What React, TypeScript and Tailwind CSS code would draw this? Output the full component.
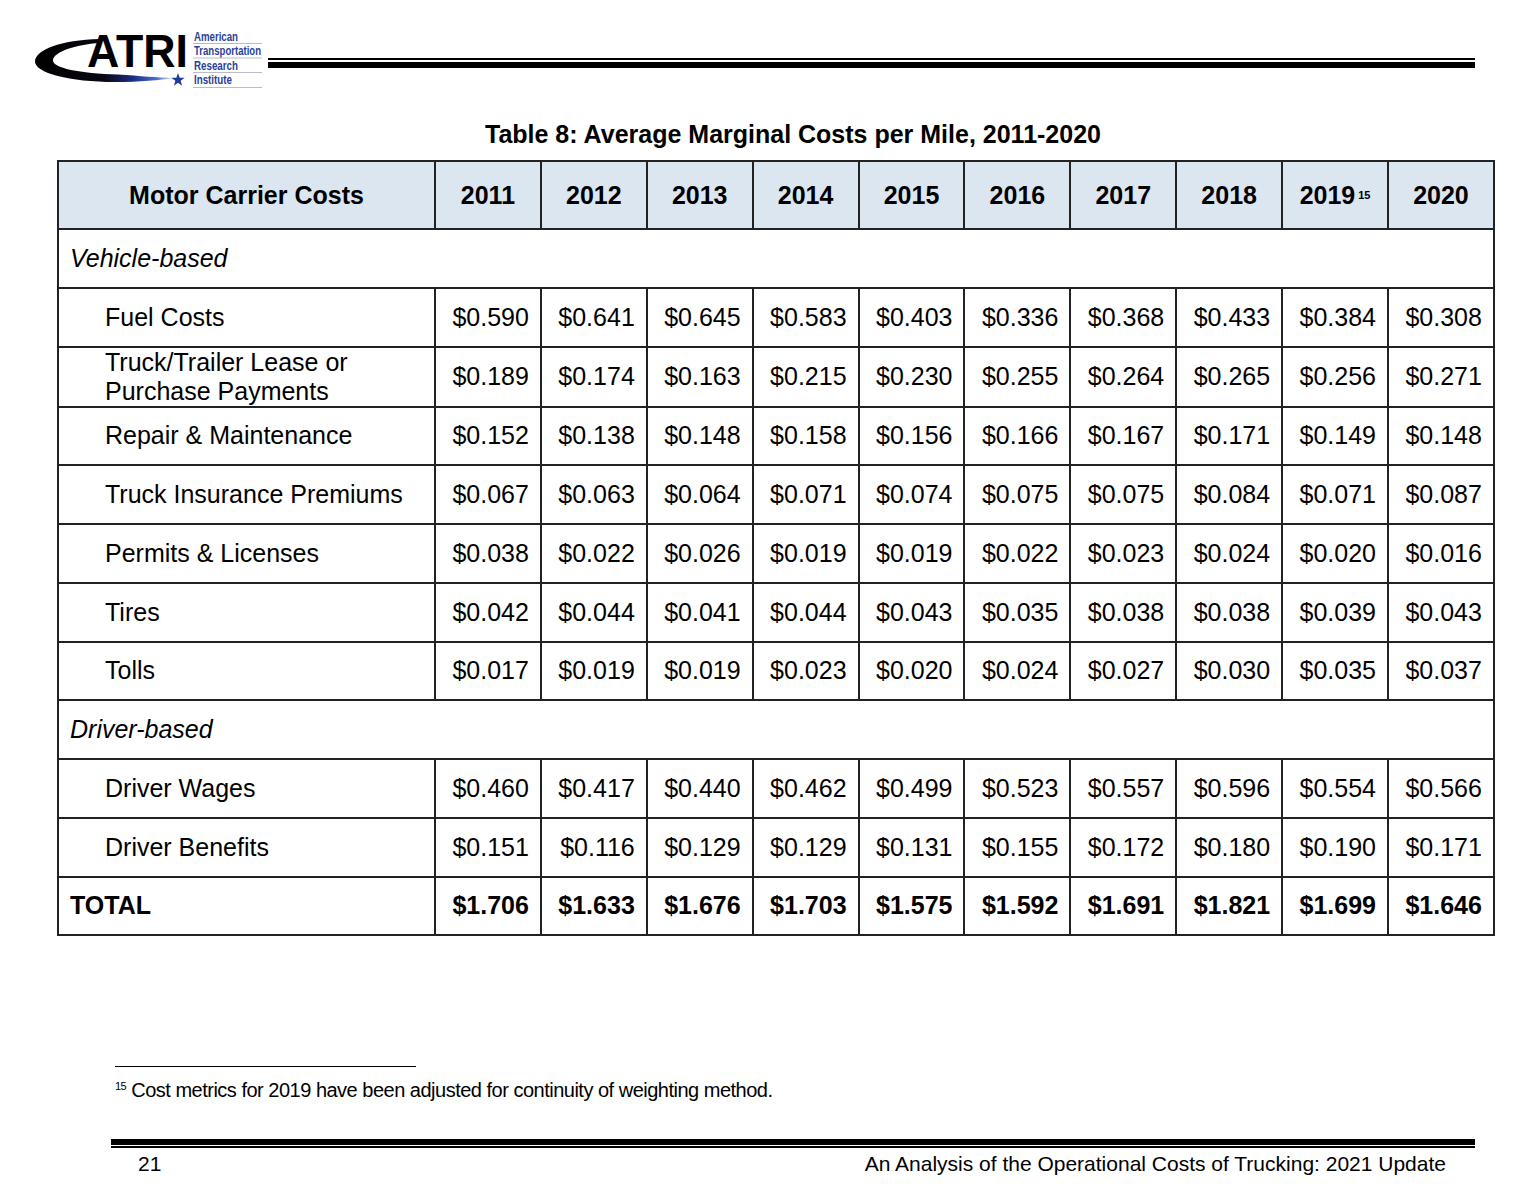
import React from "react";

const years = ["2011", "2012", "2013", "2014", "2015", "2016", "2017", "2018", "2019", "2020"];

type Row =
  | { kind: "section"; label: string }
  | { kind: "item"; label: React.ReactNode; values: string[] }
  | { kind: "total"; label: string; values: string[] };

const rows: Row[] = [
  { kind: "section", label: "Vehicle-based" },
  { kind: "item", label: "Fuel Costs", values: ["0.590", "0.641", "0.645", "0.583", "0.403", "0.336", "0.368", "0.433", "0.384", "0.308"] },
  {
    kind: "item",
    label: (
      <>
        Truck/Trailer Lease or
        <br />
        Purchase Payments
      </>
    ),
    values: ["0.189", "0.174", "0.163", "0.215", "0.230", "0.255", "0.264", "0.265", "0.256", "0.271"],
  },
  { kind: "item", label: "Repair & Maintenance", values: ["0.152", "0.138", "0.148", "0.158", "0.156", "0.166", "0.167", "0.171", "0.149", "0.148"] },
  { kind: "item", label: "Truck Insurance Premiums", values: ["0.067", "0.063", "0.064", "0.071", "0.074", "0.075", "0.075", "0.084", "0.071", "0.087"] },
  { kind: "item", label: "Permits & Licenses", values: ["0.038", "0.022", "0.026", "0.019", "0.019", "0.022", "0.023", "0.024", "0.020", "0.016"] },
  { kind: "item", label: "Tires", values: ["0.042", "0.044", "0.041", "0.044", "0.043", "0.035", "0.038", "0.038", "0.039", "0.043"] },
  { kind: "item", label: "Tolls", values: ["0.017", "0.019", "0.019", "0.023", "0.020", "0.024", "0.027", "0.030", "0.035", "0.037"] },
  { kind: "section", label: "Driver-based" },
  { kind: "item", label: "Driver Wages", values: ["0.460", "0.417", "0.440", "0.462", "0.499", "0.523", "0.557", "0.596", "0.554", "0.566"] },
  { kind: "item", label: "Driver Benefits", values: ["0.151", "0.116", "0.129", "0.129", "0.131", "0.155", "0.172", "0.180", "0.190", "0.171"] },
  { kind: "total", label: "TOTAL", values: ["1.706", "1.633", "1.676", "1.703", "1.575", "1.592", "1.691", "1.821", "1.699", "1.646"] },
];

function AtriLogo() {
  return (
    <svg width="230" height="64" viewBox="33 28 230 64" className="block">
      <defs>
        <linearGradient id="swoosh" gradientUnits="userSpaceOnUse" x1="35" y1="0" x2="174" y2="0">
          <stop offset="0" stopColor="#000000" />
          <stop offset="0.5" stopColor="#080814" />
          <stop offset="0.7" stopColor="#1b2c80" />
          <stop offset="0.87" stopColor="#4a6bd0" />
          <stop offset="1" stopColor="#d4def5" />
        </linearGradient>
      </defs>
      <path
        d="M100 39 C60 40 36 50 35 61 C34 73 70 82 115 82 C140 82 160 80 174 78 C158 77.5 140 76 118 74.5 C80 73.5 52 68 53 60 C54 52 75 44.5 100 43 Z"
        fill="url(#swoosh)"
      />
      <polygon
        points="178,73 179.65,77.73 184.66,77.84 180.66,80.87 182.11,85.66 178,82.8 173.89,85.66 175.34,80.87 171.34,77.84 176.35,77.73"
        fill="#1f3a9a"
      />
      <text
        x="87"
        y="67"
        fontFamily="'Liberation Sans', Arial, sans-serif"
        fontWeight="700"
        fontSize="47"
        textLength="101"
        lengthAdjust="spacingAndGlyphs"
        fill="#000"
      >
        ATRI
      </text>
      <g fontFamily="'Liberation Sans', Arial, sans-serif" fontWeight="700" fontSize="12" fill="#2a3f9b">
        <text x="194" y="40.5" textLength="44" lengthAdjust="spacingAndGlyphs">American</text>
        <text x="194" y="55" textLength="67" lengthAdjust="spacingAndGlyphs">Transportation</text>
        <text x="194" y="69.5" textLength="44" lengthAdjust="spacingAndGlyphs">Research</text>
        <text x="194" y="84" textLength="38" lengthAdjust="spacingAndGlyphs">Institute</text>
      </g>
      <g stroke="#b9bcc4" strokeWidth="1">
        <line x1="193" y1="43.5" x2="262" y2="43.5" />
        <line x1="193" y1="58" x2="262" y2="58" />
        <line x1="193" y1="72.5" x2="262" y2="72.5" />
        <line x1="193" y1="87.5" x2="262" y2="87.5" />
      </g>
    </svg>
  );
}

export default function App() {
  const cell = "border-2 border-[#222]";
  return (
    <div className="w-[1536px] h-[1189px] bg-white text-black font-['Liberation_Sans',Arial,sans-serif] overflow-hidden">
      {/* header */}
      <div className="flex items-start pt-[28px] pl-[33px]">
        <AtriLogo />
        <div className="ml-[5px] mt-[30px] w-[1207px]">
          <div className="h-[2px] bg-black" />
          <div className="mt-[2px] h-[6px] bg-black" />
        </div>
      </div>

      <div className="pl-[111px] pr-[61px]">
        <h1 className="mt-[27px] h-[30px] text-center text-[25px] font-bold leading-[30px]">
          Table 8: Average Marginal Costs per Mile, 2011-2020
        </h1>

        <table className="ml-[-54px] mt-[11px] w-[1436px] table-fixed border-collapse text-[25px] leading-[29px]">
          <colgroup>
            <col className="w-[377px]" />
            {years.map((y) => (
              <col key={y} className="w-[105.9px]" />
            ))}
          </colgroup>
          <thead>
            <tr className="h-[68px] bg-[#dce6f1]">
              <th className={`${cell} font-bold text-center`}>Motor Carrier Costs</th>
              {years.map((y) => (
                <th key={y} className={`${cell} font-bold text-center whitespace-nowrap`}>
                  {y}
                  {y === "2019" && <span className="ml-[3px] text-[11px] align-[5px]">15</span>}
                </th>
              ))}
            </tr>
          </thead>
          <tbody>
            {rows.map((r, i) => {
              if (r.kind === "section") {
                return (
                  <tr key={i} className="h-[58.75px]">
                    <td colSpan={11} className={`${cell} pl-[11px] italic`}>
                      {r.label}
                    </td>
                  </tr>
                );
              }
              const bold = r.kind === "total";
              return (
                <tr key={i} className={`h-[58.75px] ${bold ? "font-bold" : ""}`}>
                  <td className={`${cell} ${bold ? "pl-[11px]" : "pl-[46px]"}`}>{r.label}</td>
                  {r.values.map((v, j) => (
                    <td key={j} className={`${cell} text-right pr-[11px]`}>
                      ${v}
                    </td>
                  ))}
                </tr>
              );
            })}
          </tbody>
        </table>

        {/* footnote */}
        <div className="mt-[130px] ml-[4px] w-[301px] h-px bg-black" />
        <p className="mt-[7px] ml-[4px] text-[20px] leading-[24px] tracking-[-0.5px]">
          <span className="mr-[5px] text-[11px] align-[7px]">15</span>
          Cost metrics for 2019 have been adjusted for continuity of weighting method.
        </p>

        {/* footer */}
        <div className="mt-[37px] h-[6px] bg-black" />
        <div className="mt-[1px] h-[2px] bg-black" />
        <div className="mt-[3px] flex items-center justify-between pl-[27px] pr-[29px] text-[21px] leading-[26px]">
          <span>21</span>
          <span>An Analysis of the Operational Costs of Trucking: 2021 Update</span>
        </div>
      </div>
    </div>
  );
}
